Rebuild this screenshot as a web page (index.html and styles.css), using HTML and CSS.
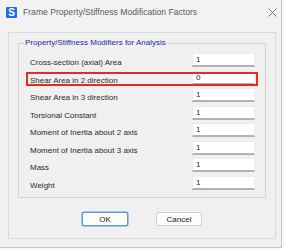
FILE: index.html
```html
<!DOCTYPE html>
<html>
<head>
<meta charset="utf-8">
<link rel="stylesheet" href="styles.css">
</head>
<body>
<div class="window">
  <div class="titlebar">
    <span class="app-icon">S</span>
    <span class="title">Frame Property/Stiffness Modification Factors</span>
    <svg class="close" width="9" height="9" viewBox="0 0 9 9"><path d="M0.5 0.5L8.5 8.5M8.5 0.5L0.5 8.5" stroke="#7a7a7a" stroke-width="1" fill="none"/></svg>
  </div>
  <div class="panel">
    <fieldset class="group">
      <legend>Property/Stiffness Modifiers for Analysis</legend>
      <div class="rows">
        <div class="row"><span class="label">Cross-section (axial) Area</span><span class="field">1</span></div>
        <div class="row highlighted"><span class="label">Shear Area in 2 direction</span><span class="field">0</span><span class="mark"></span></div>
        <div class="row"><span class="label">Shear Area in 3 direction</span><span class="field">1</span></div>
        <div class="row"><span class="label">Torsional Constant</span><span class="field">1</span></div>
        <div class="row"><span class="label">Moment of Inertia about 2 axis</span><span class="field">1</span></div>
        <div class="row"><span class="label">Moment of Inertia about 3 axis</span><span class="field">1</span></div>
        <div class="row"><span class="label">Mass</span><span class="field">1</span></div>
        <div class="row"><span class="label">Weight</span><span class="field">1</span></div>
      </div>
    </fieldset>
    <div class="buttons">
      <button class="btn default">OK</button>
      <button class="btn">Cancel</button>
    </div>
  </div>
</div>
</body>
</html>
```

FILE: styles.css
```css
html, body {
  margin: 0;
  padding: 0;
  background: #f8f8f8;
}
body {
  font-family: "Liberation Sans", Arial, sans-serif;
  font-size: 8px;
  color: #222;
}
.window {
  width: 282px;
  height: 248px;
  box-sizing: border-box;
  background: #f0f0f0;
  border-right: 1px solid #c4c4c4;
  border-bottom: 1px solid #c4c4c4;
}
.titlebar {
  height: 32px;
  box-sizing: border-box;
  padding: 7px 0 0 6px;
  display: flex;
  align-items: flex-start;
  background: #f2f2f2;
}
.app-icon {
  width: 11px;
  height: 11px;
  background: #1f6fe0;
  color: #fff;
  font-weight: bold;
  font-size: 10px;
  line-height: 11px;
  text-align: center;
  border-radius: 1px;
}
.title {
  margin-left: 6px;
  font-size: 8.6px;
  line-height: 11px;
  color: #5a5a5a;
  flex: 1;
}
.close {
  margin: 1px 4px 0 0;
}
.panel {
  margin-left: 8px;
  width: 268px;
  height: 207px;
  box-sizing: border-box;
  border: 1px solid #dadada;
  padding: 5px 9px 0 9px;
}
.group {
  margin: 0;
  padding: 0 10px 4px 5px;
  border: 1px solid #d4d4d4;
  min-width: 0;
}
.group legend {
  padding: 0 1px;
  line-height: 10px;
  font-size: 8px;
  color: #1f2a9c;
}
.rows {
  padding-top: 5px;
  margin-left: 6px;
}
.row {
  position: relative;
  height: 17.5px;
  display: flex;
  align-items: flex-start;
}
.label {
  flex: 1;
  padding-top: 5px;
  line-height: 10px;
  color: #2a2a2a;
}
.field {
  width: 63px;
  height: 14px;
  box-sizing: border-box;
  background: #fff;
  border: 1px solid #ececec;
  border-bottom: 2px solid #b2b2b2;
  padding-left: 3px;
  line-height: 11px;
  color: #2a2233;
}
.mark {
  position: absolute;
  left: -4px;
  right: -3px;
  top: 1.5px;
  height: 14px;
  border: 2px solid #e32b2b;
  box-sizing: border-box;
}
.buttons {
  display: flex;
  justify-content: center;
  gap: 28px;
  margin-top: 14px;
}
.btn {
  width: 46px;
  height: 14px;
  box-sizing: border-box;
  padding: 0;
  margin: 0;
  font-family: "Liberation Sans", Arial, sans-serif;
  font-size: 8px;
  color: #222;
  background: #fcfcfc;
  border: 1px solid #cfcfcf;
  border-radius: 2px;
}
.btn.default {
  border: 1px solid #5a9be0;
  box-shadow: 0 0 0 0.5px #5a9be0;
}
```
